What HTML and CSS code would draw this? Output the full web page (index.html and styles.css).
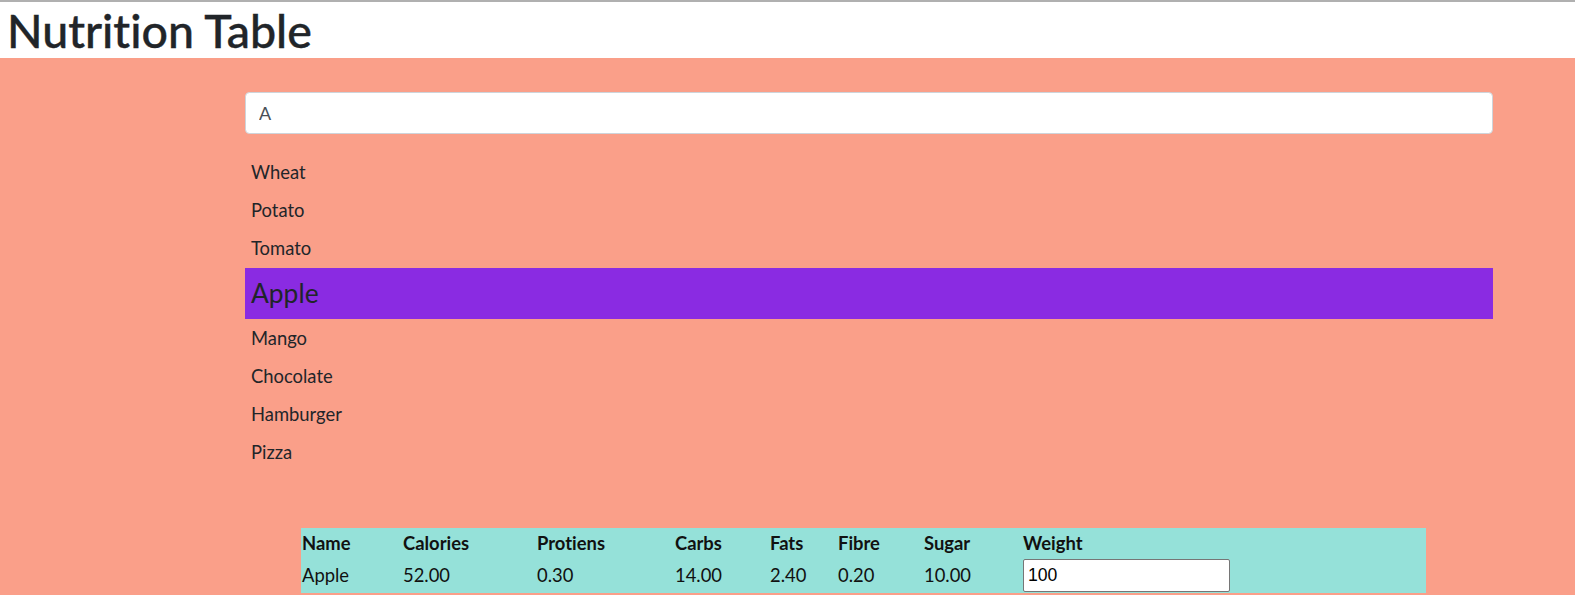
FILE: index.html
```html
<!DOCTYPE html>
<html lang="en">
<head>
<meta charset="utf-8">
<title>Nutrition Table</title>
<link rel="stylesheet" href="styles.css">
</head>
<body>
<header class="page-header">
  <h1 class="title">Nutrition Table</h1>
</header>
<main class="app">
  <div class="search-area">
    <input class="search" type="text" value="A">
    <ul class="food-list">
      <li class="food-item">Wheat</li>
      <li class="food-item">Potato</li>
      <li class="food-item">Tomato</li>
      <li class="food-item active">Apple</li>
      <li class="food-item">Mango</li>
      <li class="food-item">Chocolate</li>
      <li class="food-item">Hamburger</li>
      <li class="food-item">Pizza</li>
    </ul>
  </div>
  <table class="nutrition">
    <thead>
      <tr class="head-row">
        <th class="c-name">Name</th>
        <th class="c-cal">Calories</th>
        <th class="c-pro">Protiens</th>
        <th class="c-carb">Carbs</th>
        <th class="c-fat">Fats</th>
        <th class="c-fib">Fibre</th>
        <th class="c-sug">Sugar</th>
        <th class="c-wt">Weight</th>
      </tr>
    </thead>
    <tbody>
      <tr class="data-row">
        <td>Apple</td>
        <td>52.00</td>
        <td>0.30</td>
        <td>14.00</td>
        <td>2.40</td>
        <td>0.20</td>
        <td>10.00</td>
        <td><input class="weight" type="number" value="100"></td>
      </tr>
    </tbody>
  </table>
</main>
</body>
</html>
```

FILE: styles.css
```css
html, body {
  margin: 0;
  padding: 0;
}
body {
  font-family: Lato, "Open Sans", sans-serif;
  font-variant-ligatures: none;
  color: #212529;
  background: #ffffff;
  overflow: hidden;
}
.page-header {
  border-top: 2px solid #b0b0b0;
  height: 56px;
  background: #ffffff;
}
.title {
  margin: 0;
  padding-left: 7px;
  font-size: 46.5px;
  font-weight: 500;
  line-height: 56px;
  color: #212529;
  -webkit-text-stroke: 0.4px #212529;
}
.app {
  background: #fa9f89;
  min-height: calc(100vh - 58px);
  padding-top: 34px;
  box-sizing: border-box;
}
.search-area {
  margin-left: 245px;
  width: 1248px;
}
.search {
  display: block;
  box-sizing: border-box;
  width: 100%;
  height: 42px;
  margin: 0;
  padding: 0 13px;
  border: 1px solid #ced4da;
  border-radius: 4.4px;
  background: #ffffff;
  font-family: inherit;
  font-size: 18px;
  color: #495057;
}
.food-list {
  list-style: none;
  margin: 19px 0 0;
  padding: 0;
}
.food-item {
  padding: 6px 6px;
  font-size: 18.4px;
  line-height: 26.2px;
}
.food-item.active {
  background: #8a2be2;
  font-size: 26.4px;
  line-height: 39px;
}
.nutrition {
  margin: 57px 0 0 301px;
  width: 1125px;
  table-layout: fixed;
  border-collapse: collapse;
  background: #95e1d9;
  font-size: 18.4px;
  color: #111111;
}
.nutrition th,
.nutrition td {
  padding: 0 1px;
  text-align: left;
  vertical-align: middle;
  white-space: nowrap;
}
.nutrition th {
  font-weight: 700;
}
.head-row {
  height: 29px;
}
.data-row {
  height: 36px;
}
.c-name { width: 99px; }
.c-cal { width: 132px; }
.c-pro { width: 136px; }
.c-carb { width: 93px; }
.c-fat { width: 66px; }
.c-fib { width: 84px; }
.c-sug { width: 97px; }
.c-wt { width: auto; }
.weight {
  box-sizing: border-box;
  width: 207px;
  height: 33px;
  margin: 0;
  padding: 1px 4px;
  border: 1px solid #767676;
  border-radius: 2px;
  background: #ffffff;
  font-family: "Liberation Sans", Arial, sans-serif;
  font-size: 17.6px;
  color: #000000;
  vertical-align: middle;
  -moz-appearance: textfield;
}
.weight::-webkit-outer-spin-button,
.weight::-webkit-inner-spin-button {
  -webkit-appearance: none;
  margin: 0;
}
```
